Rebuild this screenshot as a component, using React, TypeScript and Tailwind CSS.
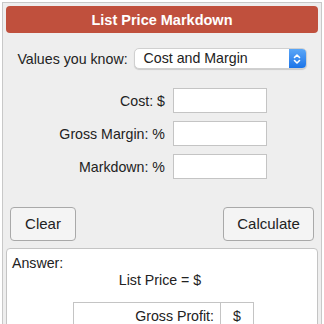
import React from "react";

export default function App() {
  const font = { fontFamily: '"Liberation Sans", Arial, Helvetica, sans-serif' };
  return (
    <div className="bg-white w-[324px] h-[324px] overflow-hidden p-[2px]" style={font}>
      <div className="w-[320px] border border-[#c8c8c8] bg-[#eeeeee] p-[3px] pb-[40px] text-[14.2px] leading-[18px] text-[#222]">
        <div className="h-[27px] rounded-[4px] bg-[#c0503d] flex items-center justify-center text-white font-bold text-[14.5px]">
          List Price Markdown
        </div>
        <div className="mt-[15px] flex items-center justify-center gap-[6px]">
          <span>Values you know:</span>
          <div className="w-[173px] h-[21px] rounded-[5px] bg-white border border-[#d0d0d0] flex items-center shadow-[0_1px_1px_rgba(0,0,0,0.15)] overflow-hidden">
            <span className="flex-1 pl-[9px] leading-none">Cost and Margin</span>
            <div className="w-[17px] h-full bg-gradient-to-b from-[#5aa6f7] to-[#1a74e8] flex items-center justify-center">
              <svg width="8" height="12" viewBox="0 0 8 12" fill="none" stroke="white" strokeWidth="1.6" strokeLinecap="round" strokeLinejoin="round">
                <path d="M1.5 4.5 L4 2 L6.5 4.5" />
                <path d="M1.5 7.5 L4 10 L6.5 7.5" />
              </svg>
            </div>
          </div>
        </div>
        <div className="mt-[19px] flex flex-col gap-[8px]">
          {["Cost: $", "Gross Margin: %", "Markdown: %"].map((l) => (
            <div key={l} className="flex items-center gap-[8px]">
              <span className="w-[159px] text-right">{l}</span>
              <div className="w-[94px] h-[25px] bg-white border border-[#c4c4c4]" />
            </div>
          ))}
        </div>
        <div className="mt-[28px] flex justify-between px-[4px]">
          <button className="w-[66px] h-[34px] rounded-[4px] border border-[#a9a9a9] bg-[#f4f4f4] text-[15px] text-[#222]">
            Clear
          </button>
          <button className="w-[91px] h-[34px] rounded-[4px] border border-[#a9a9a9] bg-[#f4f4f4] text-[15px] text-[#222]">
            Calculate
          </button>
        </div>
        <div className="mt-[7px] bg-white border border-[#c4c4c4] rounded-t-[4px] h-[90px] px-[5px] pt-[5px]">
          <div>Answer:</div>
          <div className="text-center -mt-[1px] pr-[4px]">List Price = $</div>
          <table className="mt-[13px] ml-[61px] border-collapse">
            <tbody>
              <tr>
                <td className="border border-[#c4c4c4] w-[147px] text-right pr-[6px] h-[26px]">Gross Profit:</td>
                <td className="border border-[#c4c4c4] w-[33px] text-center">$</td>
              </tr>
            </tbody>
          </table>
        </div>
      </div>
    </div>
  );
}
